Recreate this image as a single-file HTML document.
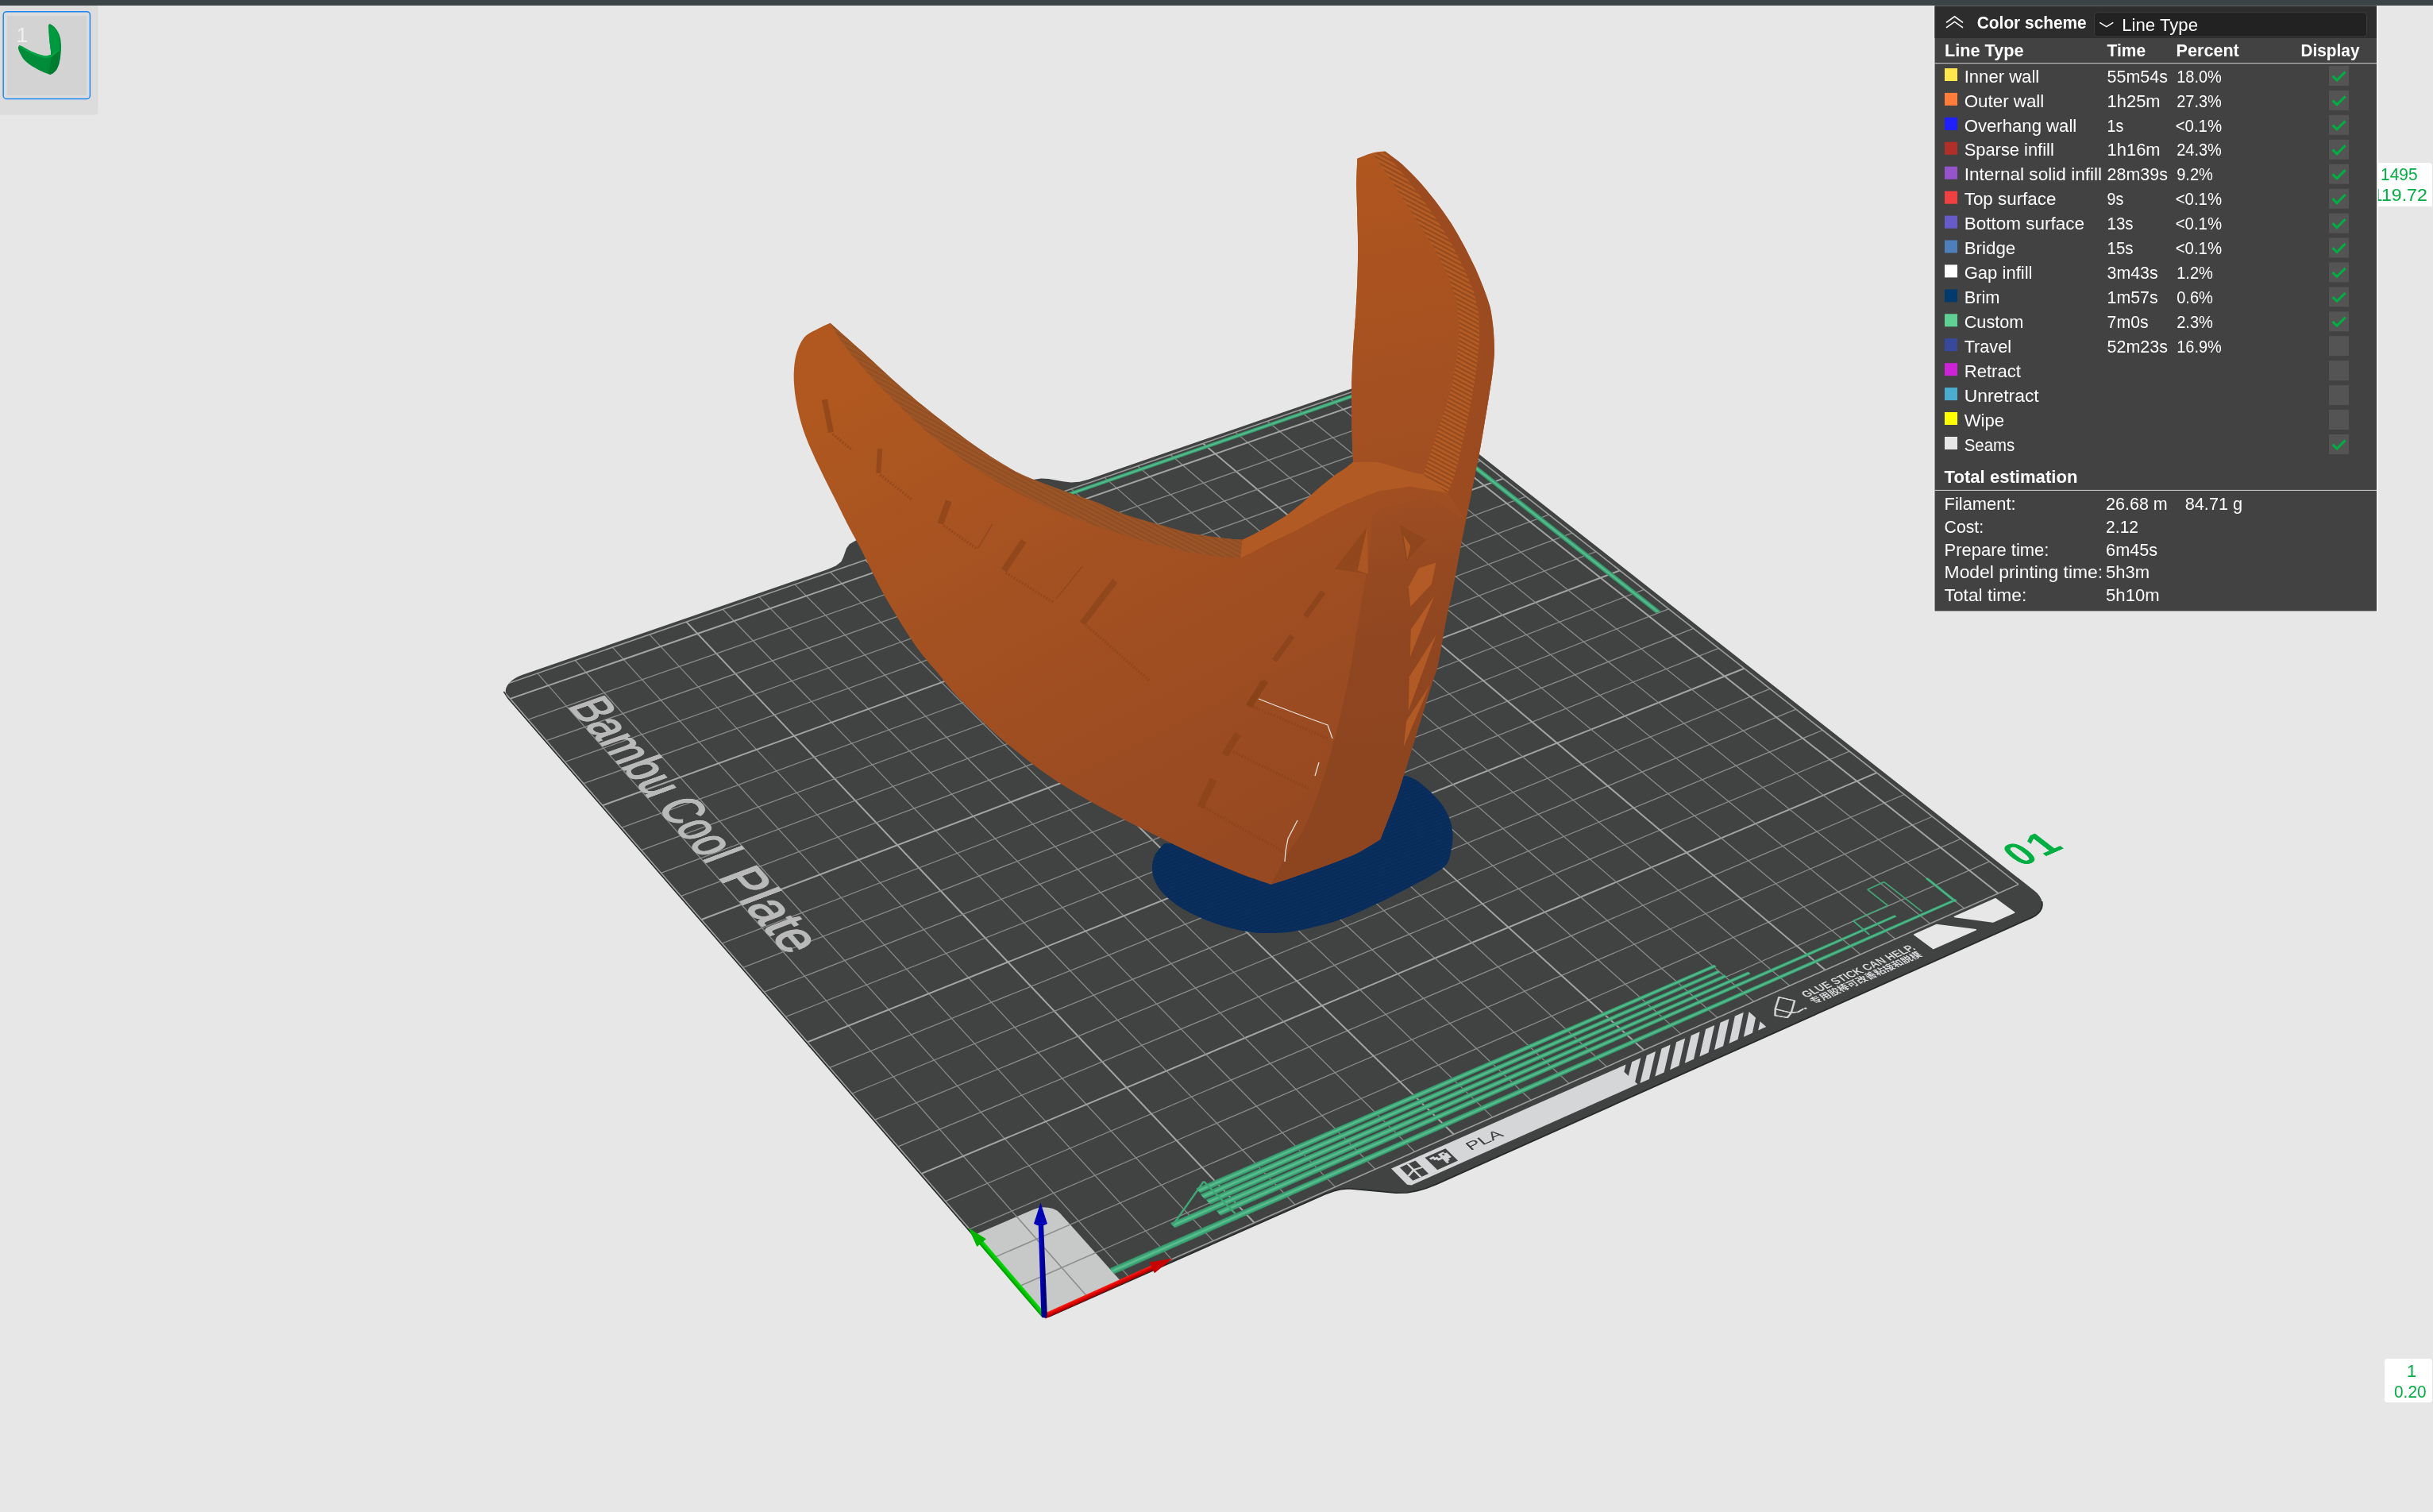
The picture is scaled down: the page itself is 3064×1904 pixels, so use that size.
<!DOCTYPE html><html><head><meta charset="utf-8"><title>Preview</title><style>html,body{margin:0;padding:0}body{width:3064px;height:1904px;background:#e7e7e7;position:relative;overflow:hidden}</style></head><body>
<svg xmlns="http://www.w3.org/2000/svg" width="3064" height="1904" viewBox="0 0 3064 1904" style="position:absolute;left:0;top:0">
<defs>
<linearGradient id="gWing" gradientUnits="userSpaceOnUse" x1="1150" y1="430" x2="1500" y2="1100"><stop offset="0" stop-color="#b0581f"/><stop offset="0.45" stop-color="#a45122"/><stop offset="1" stop-color="#974921"/></linearGradient>
<linearGradient id="gHornIn" gradientUnits="userSpaceOnUse" x1="1720" y1="200" x2="1800" y2="600"><stop offset="0" stop-color="#b0561f"/><stop offset="1" stop-color="#a04e22"/></linearGradient>
<linearGradient id="gRed" gradientUnits="userSpaceOnUse" x1="0" y1="-4" x2="0" y2="4"><stop offset="0" stop-color="#ff2a1a"/><stop offset="0.5" stop-color="#e00000"/><stop offset="1" stop-color="#7a0000"/></linearGradient>
<linearGradient id="gGreen" gradientUnits="userSpaceOnUse" x1="0" y1="-4" x2="0" y2="4"><stop offset="0" stop-color="#008a00"/><stop offset="0.5" stop-color="#00c400"/><stop offset="1" stop-color="#11e011"/></linearGradient>
<linearGradient id="gBlue" gradientUnits="userSpaceOnUse" x1="1308" y1="0" x2="1316" y2="0"><stop offset="0" stop-color="#0000d0"/><stop offset="0.45" stop-color="#0000b0"/><stop offset="1" stop-color="#000078"/></linearGradient>
<linearGradient id="gFace" gradientUnits="userSpaceOnUse" x1="0" y1="630" x2="0" y2="960"><stop offset="0" stop-color="#8d4520" stop-opacity="0.15"/><stop offset="0.5" stop-color="#8d4520" stop-opacity="0.75"/><stop offset="1" stop-color="#8d4520" stop-opacity="1"/></linearGradient>
<pattern id="hatch" width="5" height="5" patternUnits="userSpaceOnUse" patternTransform="rotate(28)"><rect width="5" height="2.2" fill="#7a3c18" fill-opacity="0.55"/></pattern>
<pattern id="brimP" width="4" height="4" patternUnits="userSpaceOnUse" patternTransform="rotate(-20)"><rect width="4" height="1.2" fill="#06244d" fill-opacity="0.5"/></pattern>
</defs>
<path d="M1312.8 1656.3 L640.1 879.4 L640.1 879.4 L638.1 876.4 L636.9 873.2 L636.7 869.9 L637.3 866.5 L638.9 863.2 L641.3 859.9 L644.5 856.9 L648.4 854.2 L653 851.7 L658 849.7 L1042.3 717.1 L1052.7 712.5 L1059.4 707.3 L1062.2 701.3 L1066 690.4 L1069.8 685.3 L1077.1 680.9 L1085.4 677.4 L1292.2 606.5 L1301.2 604 L1311.1 602.5 L1320.4 603 L1338.5 606.2 L1348.8 607.6 L1359.5 606.7 L1370.7 603.8 L1717.3 484.2 L1717.3 484.2 L1722.2 482.9 L1727.5 482.1 L1733 481.8 L1738.6 482.2 L1743.9 483.1 L1748.8 484.5 L1753.2 486.4 L1756.8 488.7 L2562.1 1121.7 L2562.1 1121.7 L2565.8 1125.1 L2568.7 1128.7 L2570.7 1132.5 L2571.8 1136.3 L2571.9 1140.1 L2571 1143.8 L2569.1 1147.3 L2566.4 1150.5 L2562.8 1153.3 L2558.4 1155.6 L1808.6 1491.4 L1795.6 1496.5 L1784.4 1499.7 L1772 1501.8 L1757.8 1502.1 L1698.2 1496.7 L1688.2 1497.6 L1679.4 1499.8 L1668.8 1503.7 L1321.5 1657.6 L1321.5 1657.6 L1318.3 1658.3 L1315.2 1657.8 L1312.8 1656.3Z" fill="#414342"/>
<path d="M634.4 870.9 L640.1 879.4 L1312.8 1656.3" fill="none" stroke="#292a2a" stroke-width="1.6"/>
<path d="M1312.8 1656.3 L1321.5 1657.6 L1668.8 1503.7 L1679.4 1499.8 L1688.2 1497.6 L1698.2 1496.7 L1757.8 1502.1 L1772 1501.8 L1784.4 1499.7 L1795.6 1496.5 L1808.6 1491.4 L2558.4 1155.6 L2558.4 1155.6 L2562.9 1153.2 L2566.5 1150.3 L2569.3 1147.1 L2571.1 1143.5 L2571.9 1139.8 L2571.7 1135.9" fill="none" stroke="#292a2a" stroke-width="1.8" stroke-linejoin="round" stroke-linecap="round"/>
<path d="M1315.4 1656.7 L1412.1 1613.9 L1335.2 1527.9 L1335.2 1527.9 L1331.2 1524.6 L1326.1 1522.1 L1320.1 1520.7 L1313.8 1520.3 L1307.5 1521.1 L1301.6 1523 L1227.2 1554.9Z" fill="#c7c8c8"/>
<clipPath id="plateClip"><path d="M1312.8 1656.3 L640.1 879.4 L640.1 879.4 L638.1 876.4 L636.9 873.2 L636.7 869.9 L637.3 866.5 L638.9 863.2 L641.3 859.9 L644.5 856.9 L648.4 854.2 L653 851.7 L658 849.7 L1042.3 717.1 L1052.7 712.5 L1059.4 707.3 L1062.2 701.3 L1066 690.4 L1069.8 685.3 L1077.1 680.9 L1085.4 677.4 L1292.2 606.5 L1301.2 604 L1311.1 602.5 L1320.4 603 L1338.5 606.2 L1348.8 607.6 L1359.5 606.7 L1370.7 603.8 L1717.3 484.2 L1717.3 484.2 L1722.2 482.9 L1727.5 482.1 L1733 481.8 L1738.6 482.2 L1743.9 483.1 L1748.8 484.5 L1753.2 486.4 L1756.8 488.7 L2562.1 1121.7 L2562.1 1121.7 L2565.8 1125.1 L2568.7 1128.7 L2570.7 1132.5 L2571.8 1136.3 L2571.9 1140.1 L2571 1143.8 L2569.1 1147.3 L2566.4 1150.5 L2562.8 1153.3 L2558.4 1155.6 L1808.6 1491.4 L1795.6 1496.5 L1784.4 1499.7 L1772 1501.8 L1757.8 1502.1 L1698.2 1496.7 L1688.2 1497.6 L1679.4 1499.8 L1668.8 1503.7 L1321.5 1657.6 L1321.5 1657.6 L1318.3 1658.3 L1315.2 1657.8 L1312.8 1656.3Z"/></clipPath>
<g stroke-linecap="butt" clip-path="url(#plateClip)">
<line x1="1369.3" y1="1632.8" x2="676.9" y2="847.9" stroke="#8b8d8c" stroke-width="1.25"/>
<line x1="1283.5" y1="1619.8" x2="2505.4" y2="1084.9" stroke="#8b8d8c" stroke-width="1.25"/>
<line x1="1422.7" y1="1609.2" x2="724.3" y2="831.5" stroke="#8b8d8c" stroke-width="1.25"/>
<line x1="1252" y1="1583.5" x2="2469.2" y2="1056.4" stroke="#8b8d8c" stroke-width="1.25"/>
<line x1="1475.5" y1="1585.8" x2="771.4" y2="815.2" stroke="#8b8d8c" stroke-width="1.25"/>
<line x1="1221.1" y1="1547.8" x2="2433.5" y2="1028.3" stroke="#8b8d8c" stroke-width="1.25"/>
<line x1="1527.8" y1="1562.6" x2="818.1" y2="799.1" stroke="#8b8d8c" stroke-width="1.25"/>
<line x1="1190.6" y1="1512.6" x2="2398.3" y2="1000.5" stroke="#8b8d8c" stroke-width="1.25"/>
<line x1="1579.6" y1="1539.7" x2="864.4" y2="783.1" stroke="#a3a5a4" stroke-width="2.0"/>
<line x1="1160.6" y1="1477.9" x2="2363.5" y2="973.2" stroke="#a3a5a4" stroke-width="2.0"/>
<line x1="1630.9" y1="1517" x2="910.3" y2="767.2" stroke="#8b8d8c" stroke-width="1.25"/>
<line x1="1131" y1="1443.8" x2="2329.2" y2="946.2" stroke="#8b8d8c" stroke-width="1.25"/>
<line x1="1681.6" y1="1494.6" x2="955.8" y2="751.5" stroke="#8b8d8c" stroke-width="1.25"/>
<line x1="1101.8" y1="1410.1" x2="2295.4" y2="919.5" stroke="#8b8d8c" stroke-width="1.25"/>
<line x1="1731.9" y1="1472.3" x2="1000.9" y2="735.9" stroke="#8b8d8c" stroke-width="1.25"/>
<line x1="1073.1" y1="1377" x2="2262" y2="893.2" stroke="#8b8d8c" stroke-width="1.25"/>
<line x1="1781.6" y1="1450.3" x2="1045.7" y2="720.5" stroke="#8b8d8c" stroke-width="1.25"/>
<line x1="1044.8" y1="1344.3" x2="2229.1" y2="867.3" stroke="#8b8d8c" stroke-width="1.25"/>
<line x1="1830.9" y1="1428.5" x2="1090.1" y2="705.1" stroke="#a3a5a4" stroke-width="2.0"/>
<line x1="1016.9" y1="1312.2" x2="2196.5" y2="841.7" stroke="#a3a5a4" stroke-width="2.0"/>
<line x1="1879.7" y1="1406.9" x2="1134.1" y2="689.9" stroke="#8b8d8c" stroke-width="1.25"/>
<line x1="989.5" y1="1280.4" x2="2164.4" y2="816.4" stroke="#8b8d8c" stroke-width="1.25"/>
<line x1="1928.1" y1="1385.5" x2="1177.8" y2="674.8" stroke="#8b8d8c" stroke-width="1.25"/>
<line x1="962.4" y1="1249.2" x2="2132.7" y2="791.4" stroke="#8b8d8c" stroke-width="1.25"/>
<line x1="1975.9" y1="1364.3" x2="1221.1" y2="659.8" stroke="#8b8d8c" stroke-width="1.25"/>
<line x1="935.7" y1="1218.3" x2="2101.4" y2="766.8" stroke="#8b8d8c" stroke-width="1.25"/>
<line x1="2023.4" y1="1343.3" x2="1264.1" y2="645" stroke="#8b8d8c" stroke-width="1.25"/>
<line x1="909.3" y1="1188" x2="2070.5" y2="742.4" stroke="#8b8d8c" stroke-width="1.25"/>
<line x1="2070.3" y1="1322.5" x2="1306.8" y2="630.3" stroke="#a3a5a4" stroke-width="2.0"/>
<line x1="883.4" y1="1158" x2="2040" y2="718.4" stroke="#a3a5a4" stroke-width="2.0"/>
<line x1="2116.8" y1="1301.9" x2="1349.1" y2="615.6" stroke="#8b8d8c" stroke-width="1.25"/>
<line x1="857.8" y1="1128.4" x2="2009.9" y2="694.7" stroke="#8b8d8c" stroke-width="1.25"/>
<line x1="2162.9" y1="1281.5" x2="1391" y2="601.1" stroke="#8b8d8c" stroke-width="1.25"/>
<line x1="832.5" y1="1099.3" x2="1980.1" y2="671.2" stroke="#8b8d8c" stroke-width="1.25"/>
<line x1="2208.6" y1="1261.3" x2="1432.7" y2="586.8" stroke="#8b8d8c" stroke-width="1.25"/>
<line x1="807.6" y1="1070.6" x2="1950.7" y2="648.1" stroke="#8b8d8c" stroke-width="1.25"/>
<line x1="2253.8" y1="1241.3" x2="1474" y2="572.5" stroke="#8b8d8c" stroke-width="1.25"/>
<line x1="783.1" y1="1042.2" x2="1921.7" y2="625.2" stroke="#8b8d8c" stroke-width="1.25"/>
<line x1="2298.6" y1="1221.5" x2="1514.9" y2="558.3" stroke="#a3a5a4" stroke-width="2.0"/>
<line x1="758.9" y1="1014.3" x2="1893" y2="602.6" stroke="#a3a5a4" stroke-width="2.0"/>
<line x1="2343" y1="1201.8" x2="1555.6" y2="544.3" stroke="#8b8d8c" stroke-width="1.25"/>
<line x1="735" y1="986.7" x2="1864.7" y2="580.3" stroke="#8b8d8c" stroke-width="1.25"/>
<line x1="2387" y1="1182.4" x2="1595.9" y2="530.3" stroke="#8b8d8c" stroke-width="1.25"/>
<line x1="711.4" y1="959.5" x2="1836.7" y2="558.3" stroke="#8b8d8c" stroke-width="1.25"/>
<line x1="2430.6" y1="1163.1" x2="1636" y2="516.5" stroke="#8b8d8c" stroke-width="1.25"/>
<line x1="688.1" y1="932.6" x2="1809" y2="536.5" stroke="#8b8d8c" stroke-width="1.25"/>
<line x1="2473.8" y1="1144" x2="1675.7" y2="502.8" stroke="#8b8d8c" stroke-width="1.25"/>
<line x1="665.1" y1="906.1" x2="1781.7" y2="515" stroke="#8b8d8c" stroke-width="1.25"/>
<line x1="2516.6" y1="1125" x2="1715.1" y2="489.2" stroke="#a3a5a4" stroke-width="2.0"/>
<line x1="642.5" y1="879.9" x2="1754.7" y2="493.7" stroke="#a3a5a4" stroke-width="2.0"/>
<line x1="1315.4" y1="1656.7" x2="2542" y2="1113.7" stroke="#9c9e9d" stroke-width="1.6"/>
<line x1="2542" y1="1113.7" x2="1738.6" y2="481.1" stroke="#9c9e9d" stroke-width="1.6"/>
<line x1="1738.6" y1="481.1" x2="629" y2="864.4" stroke="#9c9e9d" stroke-width="1.6"/>
<line x1="629" y1="864.4" x2="1315.4" y2="1656.7" stroke="#9c9e9d" stroke-width="1.6"/>
</g>
<g>
<line x1="1369.3" y1="1632.8" x2="1280.4" y2="1532" stroke="#8f9090" stroke-width="1.3"/>
<line x1="1283.5" y1="1619.8" x2="1379.7" y2="1577.7" stroke="#8f9090" stroke-width="1.3"/>
<line x1="1252" y1="1583.5" x2="1347.8" y2="1542" stroke="#8f9090" stroke-width="1.3"/>
</g>
<path d="M1752 1471.6 L2039.3 1344.2 L2062.4 1365.3 L1777.8 1492.4 L1772.1 1491.7Z" fill="#d4d6d7"/>
<path d="M2045.1 1350.5 L2047.5 1340.5 L2038.6 1344.5Z" fill="#d4d6d7"/>
<path d="M2058.9 1363.1 L2066.3 1332.2 L2055.1 1337.2 L2050.6 1355.5Z" fill="#d4d6d7"/>
<path d="M2065.4 1364 L2076.8 1358.9 L2085 1323.9 L2073.8 1328.9Z" fill="#d4d6d7"/>
<path d="M2084.3 1355.5 L2095.6 1350.5 L2103.7 1315.6 L2092.5 1320.6Z" fill="#d4d6d7"/>
<path d="M2103.1 1347.2 L2114.3 1342.1 L2122.2 1307.4 L2111.1 1312.3Z" fill="#d4d6d7"/>
<path d="M2121.8 1338.8 L2133 1333.8 L2140.7 1299.2 L2129.7 1304.1Z" fill="#d4d6d7"/>
<path d="M2140.4 1330.5 L2151.5 1325.5 L2159.2 1291 L2148.1 1295.9Z" fill="#d4d6d7"/>
<path d="M2159 1322.2 L2170.1 1317.2 L2177.5 1282.9 L2166.5 1287.8Z" fill="#d4d6d7"/>
<path d="M2177.5 1313.9 L2188.5 1309 L2195.8 1274.8 L2184.9 1279.6Z" fill="#d4d6d7"/>
<path d="M2195.9 1305.7 L2206.9 1300.8 L2211 1281.4 L2202.6 1274.1Z" fill="#d4d6d7"/>
<path d="M2214.2 1297.5 L2224.3 1293 L2216.6 1286.3Z" fill="#d4d6d7"/>
<path d="M1762.9 1470.2 L1782.5 1461.5 L1799.1 1477.9 L1779.4 1486.7Z" fill="#414342"/>
<path d="M1774 1465.3 L1790.5 1481.7 L1788.1 1482.8 L1771.6 1466.3Z" fill="#d4d6d7"/>
<path d="M1779.6 1472.3 L1790.3 1469 L1791.6 1470.8 L1780.8 1474.1Z" fill="#d4d6d7"/>
<path d="M1781.5 1473.7 L1775 1481.5 L1772.4 1480.5 L1778.9 1472.7Z" fill="#d4d6d7"/>
<path d="M1794.5 1457.7 L1820.4 1446.2 L1836.1 1461.6 L1810.2 1473.2Z" fill="#414342"/>
<path d="M1799.8 1458.4 L1805.3 1455.9 L1807.4 1458.1 L1802 1460.5Z" fill="#d4d6d7"/>
<path d="M1810.7 1453.5 L1817.6 1450.5 L1819.8 1452.6 L1812.9 1455.7Z" fill="#d4d6d7"/>
<path d="M1804.4 1459 L1809.9 1456.6 L1812 1458.7 L1806.6 1461.2Z" fill="#d4d6d7"/>
<path d="M1812.6 1455.4 L1822 1451.2 L1824.1 1453.4 L1814.8 1457.5Z" fill="#d4d6d7"/>
<path d="M1809 1459.7 L1823.9 1453.1 L1826.1 1455.2 L1811.2 1461.8Z" fill="#d4d6d7"/>
<path d="M1816.4 1459.1 L1825.8 1455 L1828 1457.1 L1818.6 1461.3Z" fill="#d4d6d7"/>
<path d="M1818.3 1461 L1823.7 1458.6 L1825.9 1460.7 L1820.5 1463.2Z" fill="#d4d6d7"/>
<path d="M1820.2 1462.9 L1822.9 1461.7 L1825.1 1463.8 L1822.4 1465Z" fill="#d4d6d7"/>
<path d="M1815.8 1453.6 L1818 1452.6 L1819.6 1454.2 L1817.4 1455.1Z" fill="#414342"/>
<path d="M2410.7 1177 L2438.9 1164.4 L2488.3 1170.7 L2434.8 1194.6Z" fill="#e7e7e7" stroke="#e7e7e7" stroke-width="1.5" stroke-linejoin="round"/>
<path d="M2461.4 1154.5 L2512.9 1131.7 L2536.8 1149.1 L2509.8 1161.1Z" fill="#e7e7e7" stroke="#e7e7e7" stroke-width="1.5" stroke-linejoin="round"/>
<path d="M1180.3 677.2 L1732.7 486.2 L1736.9 489.5 L1184.2 680.8Z" fill="#33926a"/>
<path d="M1180.9 677.7 L1733.3 486.6 L1736.3 489 L1183.6 680.3Z" fill="#40a676"/>
<path d="M1181.7 678.5 L1734.2 487.3 L1735.4 488.3 L1182.8 679.6Z" fill="#58be8f"/>
<path d="M1732.7 486.1 L2091.5 769.5 L2085 772 L1726.4 488.3Z" fill="#33926a"/>
<path d="M1731.8 486.4 L2090.6 769.9 L2085.9 771.7 L1727.3 488Z" fill="#40a676"/>
<path d="M1730.5 486.9 L2089.2 770.4 L2087.3 771.1 L1728.6 487.5Z" fill="#58be8f"/>
<path d="M1397.3 1597.3 L2461.8 1131.7 L2464.7 1134 L1403.4 1604.2Z" fill="#33926a"/>
<path d="M1398.1 1598.3 L2462.2 1132 L2464.3 1133.7 L1402.6 1603.3Z" fill="#40a676"/>
<path d="M1399.4 1599.8 L2462.8 1132.5 L2463.7 1133.2 L1401.3 1601.8Z" fill="#58be8f"/>
<path d="M2461 1135.9 L2424.7 1106.7 L2428.1 1105.2 L2464.5 1134.4Z" fill="#33926a"/>
<path d="M2461.5 1135.7 L2425.2 1106.5 L2427.7 1105.4 L2464 1134.6Z" fill="#40a676"/>
<path d="M2462.2 1135.4 L2425.9 1106.2 L2426.9 1105.7 L2463.3 1134.9Z" fill="#58be8f"/>
<path d="M1531.8 1524.6 L2385.8 1152.2 L2388.6 1154.5 L1537.5 1530.7Z" fill="#33926a"/>
<path d="M1532.6 1525.4 L2386.2 1152.5 L2388.2 1154.2 L1536.7 1529.8Z" fill="#40a676"/>
<path d="M1533.8 1526.7 L2386.8 1153 L2387.6 1153.7 L1535.5 1528.6Z" fill="#58be8f"/>
<path d="M1473.8 1540 L2201.2 1223.6 L2204.7 1226.6 L1479.7 1546.3Z" fill="#33926a"/>
<path d="M1474.7 1540.8 L2201.7 1224 L2204.2 1226.2 L1478.9 1545.4Z" fill="#40a676"/>
<path d="M1475.9 1542.2 L2202.4 1224.6 L2203.5 1225.6 L1477.6 1544.1Z" fill="#58be8f"/>
<path d="M1518.7 1510.6 L2171.5 1227.3 L2175.1 1230.4 L1524.3 1516.7Z" fill="#33926a"/>
<path d="M1519.4 1511.4 L2172 1227.7 L2174.6 1230 L1523.5 1515.8Z" fill="#40a676"/>
<path d="M1520.6 1512.7 L2172.7 1228.4 L2173.8 1229.3 L1522.3 1514.5Z" fill="#58be8f"/>
<path d="M1511.6 1503.8 L2163 1221.8 L2166.6 1224.9 L1517.3 1509.9Z" fill="#33926a"/>
<path d="M1512.4 1504.7 L2163.5 1222.2 L2166.1 1224.5 L1516.5 1509.1Z" fill="#40a676"/>
<path d="M1513.6 1506 L2164.3 1222.9 L2165.4 1223.8 L1515.3 1507.8Z" fill="#58be8f"/>
<path d="M1506.1 1496.5 L2158.3 1214.7 L2161.9 1217.8 L1511.8 1502.5Z" fill="#33926a"/>
<path d="M1506.9 1497.3 L2158.8 1215.1 L2161.4 1217.3 L1511 1501.6Z" fill="#40a676"/>
<path d="M1508.1 1498.6 L2159.5 1215.7 L2160.6 1216.7 L1509.8 1500.4Z" fill="#58be8f"/>
<path d="M1475.5 1542.7 L1514.7 1487.3 L1517.1 1488 L1478 1543.5Z" fill="#40a676"/>
<path d="M1517.1 1487.1 L1556.8 1527.8 L1554.5 1528.8 L1514.8 1488.2Z" fill="#40a676"/>
<path d="M2353.3 1177.4 L2332.9 1159.9 L2334.7 1159.1 L2355.2 1176.6Z" fill="#40a676"/>
<path d="M2333.1 1158.9 L2376.6 1139.8 L2378.2 1141 L2334.6 1160.1Z" fill="#40a676"/>
<path d="M2376.5 1140.8 L2351 1120.5 L2352.8 1119.7 L2378.3 1140Z" fill="#40a676"/>
<path d="M2351.1 1119.5 L2371.9 1110 L2373.5 1111.2 L2352.6 1120.7Z" fill="#40a676"/>
<path d="M2373.6 1110.2 L2421.4 1147.4 L2419.6 1148.3 L2371.8 1111Z" fill="#40a676"/>
<path d="M1465.8 1062.4 C1463.9 1064.8 1457 1071.6 1454.5 1076.7 C1452 1081.8 1451 1087.7 1451 1093.2 C1451 1098.7 1452 1104.1 1454.5 1109.6 C1457 1115.1 1460.5 1120.6 1465.8 1126.1 C1471.1 1131.6 1478.1 1137.4 1486.3 1142.5 C1494.5 1147.6 1504.8 1152.6 1515.1 1156.9 C1525.4 1161.2 1537 1165.3 1548 1168.2 C1559 1171.1 1569.5 1173.4 1580.8 1174.4 C1592.1 1175.4 1604.8 1175.3 1615.8 1174.4 C1626.8 1173.5 1634.6 1172 1646.6 1169.2 C1658.6 1166.5 1674 1162.7 1687.7 1157.9 C1701.4 1153.1 1715.1 1146.7 1728.8 1140.4 C1742.5 1134.1 1757.9 1126.1 1769.9 1119.9 C1781.9 1113.8 1792.1 1108.6 1800.7 1103.5 C1809.3 1098.4 1816.8 1094.6 1821.3 1089.1 C1825.8 1083.6 1826.1 1076.8 1827.5 1070.6 C1828.9 1064.4 1829.7 1058.3 1829.5 1052.1 C1829.3 1045.9 1828.5 1039.8 1826.4 1033.6 C1824.4 1027.4 1821.1 1020.9 1817.2 1015.1 C1813.3 1009.3 1807.9 1003.7 1802.8 998.6 C1797.7 993.5 1791.2 987.8 1786.4 984.3 C1781.6 980.8 1776.1 978.8 1774 977.7 C1769.2 977.2 1749.8 975.5 1745 975 C1737.5 985.8 1707.5 1029.2 1700 1040 C1683.3 1049.2 1616.7 1085.8 1600 1095 C1585 1089.2 1525 1065.8 1510 1060 C1502.6 1060.4 1473.2 1062 1465.8 1062.4Z" fill="#0a2f5e"/>
<path d="M1465.8 1062.4 C1463.9 1064.8 1457 1071.6 1454.5 1076.7 C1452 1081.8 1451 1087.7 1451 1093.2 C1451 1098.7 1452 1104.1 1454.5 1109.6 C1457 1115.1 1460.5 1120.6 1465.8 1126.1 C1471.1 1131.6 1478.1 1137.4 1486.3 1142.5 C1494.5 1147.6 1504.8 1152.6 1515.1 1156.9 C1525.4 1161.2 1537 1165.3 1548 1168.2 C1559 1171.1 1569.5 1173.4 1580.8 1174.4 C1592.1 1175.4 1604.8 1175.3 1615.8 1174.4 C1626.8 1173.5 1634.6 1172 1646.6 1169.2 C1658.6 1166.5 1674 1162.7 1687.7 1157.9 C1701.4 1153.1 1715.1 1146.7 1728.8 1140.4 C1742.5 1134.1 1757.9 1126.1 1769.9 1119.9 C1781.9 1113.8 1792.1 1108.6 1800.7 1103.5 C1809.3 1098.4 1816.8 1094.6 1821.3 1089.1 C1825.8 1083.6 1826.1 1076.8 1827.5 1070.6 C1828.9 1064.4 1829.7 1058.3 1829.5 1052.1 C1829.3 1045.9 1828.5 1039.8 1826.4 1033.6 C1824.4 1027.4 1821.1 1020.9 1817.2 1015.1 C1813.3 1009.3 1807.9 1003.7 1802.8 998.6 C1797.7 993.5 1791.2 987.8 1786.4 984.3 C1781.6 980.8 1776.1 978.8 1774 977.7 C1769.2 977.2 1749.8 975.5 1745 975 C1737.5 985.8 1707.5 1029.2 1700 1040 C1683.3 1049.2 1616.7 1085.8 1600 1095 C1585 1089.2 1525 1065.8 1510 1060 C1502.6 1060.4 1473.2 1062 1465.8 1062.4Z" fill="url(#brimP)"/>
<path d="M1045.6 406.7 C1048.8 409.6 1057 417 1065.1 424.2 C1073.1 431.4 1084 440.8 1093.9 449.9 C1103.8 459 1114.4 469.4 1124.7 478.6 C1135 487.9 1145.2 496.8 1155.5 505.4 C1165.8 514 1176 522 1186.3 530 C1196.6 538 1206.9 546.2 1217.2 553.7 C1227.5 561.2 1237.7 568.5 1248 575.2 C1258.3 581.9 1270.2 589.1 1278.8 593.7 C1287.4 598.3 1289.1 598.9 1299.4 603 C1309.7 607.1 1326.8 613.4 1340.5 618.4 C1354.2 623.4 1369.3 628 1381.6 632.8 C1393.9 637.6 1402.1 642.8 1414.4 647.3 C1426.7 651.8 1441.8 655.7 1455.5 659.6 C1469.2 663.5 1484.6 668.1 1496.6 670.9 C1508.6 673.6 1518.8 674.8 1527.4 676.1 C1536 677.4 1541.8 678 1548 678.6 C1554.2 679.2 1561.7 679.6 1564.4 679.8 C1566.8 678.7 1573 676 1578.8 673 C1584.6 670 1592.6 665.7 1599.4 661.7 C1606.2 657.8 1613.1 654.1 1619.9 649.3 C1626.8 644.5 1633.7 638.7 1640.5 632.9 C1647.3 627.1 1654.2 620.2 1661 614.4 C1667.8 608.6 1676.1 602.1 1681.6 598 C1687.1 593.9 1690.2 592.7 1693.9 590 C1697.7 587.3 1702.4 583.2 1704.1 581.8 C1703.9 578.7 1703.4 573.2 1703.1 563.3 C1702.8 553.4 1702.2 535.9 1702.1 522.2 C1702 508.5 1702 494.8 1702.3 481.1 C1702.6 467.4 1703.2 454.2 1704 440 C1704.8 425.8 1706.3 410.3 1707.2 396.1 C1708.1 381.9 1708.8 368.7 1709.3 355 C1709.8 341.3 1710.3 327.6 1710.3 313.9 C1710.3 300.2 1709.6 286.5 1709.3 272.8 C1709 259.1 1708.2 243.9 1708.2 231.7 C1708.2 219.5 1709.1 205.1 1709.3 199.8 C1712.5 198.6 1723 194.1 1728.8 192.6 C1734.6 191.1 1741.6 190.9 1744.2 190.6 C1747.8 193.3 1758.8 200.8 1765.8 207 C1772.8 213.2 1779.4 220 1786.3 227.5 C1793.2 235 1800.1 243.3 1806.9 252.2 C1813.8 261.1 1821.2 271.4 1827.4 281 C1833.6 290.6 1838.8 300.1 1843.9 309.7 C1849.1 319.3 1854.2 329.6 1858.3 338.5 C1862.4 347.4 1865.4 355 1868.5 363.2 C1871.6 371.4 1874.7 378.9 1876.8 387.8 C1878.9 396.7 1880.1 407.1 1880.9 416.6 C1881.8 426.1 1882.2 435.8 1881.9 445 C1881.6 454.2 1880.5 462.6 1879.3 472 C1878.1 481.4 1876.3 491.6 1874.7 501.7 C1873.1 511.8 1871.3 522.2 1869.6 532.5 C1867.9 542.8 1866.3 553 1864.4 563.3 C1862.5 573.6 1860.3 583.8 1858.3 594.1 C1856.2 604.4 1854.2 614.7 1852.1 625 C1850 635.3 1848 645.5 1845.9 655.8 C1843.9 666.1 1841.8 676.3 1839.8 686.6 C1837.8 696.9 1836.2 706.9 1834.2 717.4 C1832.2 727.9 1829.9 739.8 1827.8 749.9 C1825.7 760 1823.6 767.6 1821.6 778 C1819.5 788.4 1817.4 801.7 1815.5 812 C1813.6 822.3 1812.2 832 1810.2 840 C1808.2 848 1805.8 852.9 1803.6 859.8 C1801.4 866.7 1800.3 870.5 1797 881.3 C1793.7 892 1788.2 910 1783.8 924.3 C1779.4 938.6 1774.7 954.1 1770.6 967.3 C1766.5 980.5 1764.4 988.6 1759 1003.6 C1753.6 1018.6 1741.8 1048.1 1738.3 1057 C1733.3 1060 1720.1 1069 1708.3 1074.7 C1696.5 1080.4 1680.9 1086 1667.2 1091.1 C1653.5 1096.2 1637.2 1101.7 1626.1 1105.5 C1615 1109.3 1604.7 1112.3 1600.4 1113.7 C1595.6 1112 1581.3 1107.5 1571.3 1103.8 C1561.3 1100.1 1550.8 1095.8 1540.5 1091.5 C1530.2 1087.2 1519.9 1082.7 1509.6 1078.1 C1499.3 1073.5 1489.1 1068.7 1478.8 1063.7 C1468.5 1058.7 1458.3 1053.4 1448 1048.3 C1437.7 1043.2 1427.5 1038.2 1417.2 1032.9 C1406.9 1027.6 1396.6 1022.1 1386.3 1016.5 C1376 1010.9 1365.8 1005.2 1355.5 999 C1345.2 992.8 1335 986.5 1324.7 979.5 C1314.4 972.5 1304.2 964.8 1293.9 956.9 C1283.6 949 1273.3 941.1 1263 932.2 C1252.7 923.3 1242.5 913.3 1232.2 903.4 C1221.9 893.5 1210.1 882.1 1201.4 872.6 C1192.7 863.1 1187.2 855.1 1180.2 846.6 C1173.2 838.1 1166.1 830.5 1159.6 821.9 C1153.1 813.3 1146.9 804.1 1141.1 795.2 C1135.3 786.3 1130.2 777.8 1124.7 768.5 C1119.2 759.2 1113.3 749.3 1108.2 739.7 C1103.1 730.1 1098.4 719.9 1093.9 711 C1089.5 702.1 1085.6 694.2 1081.5 686.3 C1077.4 678.4 1074 673 1069.2 663.7 C1064.4 654.5 1058.3 641.8 1052.8 630.8 C1047.3 619.8 1041.6 609 1036.3 598 C1031 587 1025.2 575 1020.9 565 C1016.6 555 1013.5 547.1 1010.6 538.2 C1007.8 529.3 1005.5 520 1003.8 511.5 C1002.1 502.9 1000.9 494.4 1000.3 486.9 C999.6 479.4 999.5 472.8 999.9 466.3 C1000.2 459.8 1001.1 453.3 1002.4 447.8 C1003.7 442.3 1005.3 437.7 1007.5 433.4 C1009.7 429.1 1012 425.4 1015.8 422.1 C1019.6 418.9 1025.1 416.5 1030.1 413.9 C1035.1 411.3 1043 407.9 1045.6 406.7Z" fill="url(#gWing)"/>
<path d="M1600.4 1113.7 L1618 1080 L1640 1048.3 L1658.2 1005.3 L1671.4 964 L1683 922.6 L1694.5 873 L1701.2 840 L1707.6 800 L1716 750 L1722 715 L1726 680 L1728 650 L1740 640 L1800 625 L1845.9 655.8 L1839.8 686.6 L1834.2 717.4 L1827.8 749.9 L1821.6 778 L1815.5 812 L1810.2 840 L1803.6 859.8 L1797 881.3 L1783.8 924.3 L1770.6 967.3 L1759 1003.6 L1738.3 1057 L1708.3 1074.7 L1667.2 1091.1 L1626.1 1105.5Z" fill="url(#gFace)"/>
<path d="M1564.4 679.8 L1578.8 673 L1599.4 661.7 L1619.9 649.3 L1640.5 632.9 L1661 614.4 L1681.6 598 L1693.9 590 L1704.1 581.8 L1735 581.8 L1776.1 594.1 L1792.5 597.2 L1823.3 620.8 L1823.3 620.8 L1776.1 612.6 L1735 618.8 L1693.9 635.2 L1665 650 L1632.2 668.1 L1600 683 L1580 694 L1562 703Z" fill="#b25a24"/>
<path d="M1045.6 406.7 L1065.1 424.2 L1093.9 449.9 L1124.7 478.6 L1155.5 505.4 L1186.3 530 L1217.2 553.7 L1248 575.2 L1278.8 593.7 L1299.4 603 L1340.5 618.4 L1381.6 632.8 L1414.4 647.3 L1455.5 659.6 L1496.6 670.9 L1527.4 676.1 L1548 678.6 L1564.4 679.8 L1562 703 L1540 701.5 L1500 696 L1450 684.2 L1402.1 669.8 L1361 655.4 L1319.9 639 L1289.1 624.6 L1258.3 608.1 L1227.4 589.6 L1196.6 567 L1165.8 542.4 L1135 513.6 L1104.1 482.8 L1073.3 447.8 L1058 428 L1045.6 406.7Z" fill="#95562a" fill-opacity="0.75"/>
<path d="M1045.6 406.7 L1065.1 424.2 L1093.9 449.9 L1124.7 478.6 L1155.5 505.4 L1186.3 530 L1217.2 553.7 L1248 575.2 L1278.8 593.7 L1299.4 603 L1340.5 618.4 L1381.6 632.8 L1414.4 647.3 L1455.5 659.6 L1496.6 670.9 L1527.4 676.1 L1548 678.6 L1564.4 679.8 L1562 703 L1540 701.5 L1500 696 L1450 684.2 L1402.1 669.8 L1361 655.4 L1319.9 639 L1289.1 624.6 L1258.3 608.1 L1227.4 589.6 L1196.6 567 L1165.8 542.4 L1135 513.6 L1104.1 482.8 L1073.3 447.8 L1058 428 L1045.6 406.7Z" fill="url(#hatch)" fill-opacity="0.5"/>
<path d="M1709.3 199.8 L1708.2 231.7 L1709.3 272.8 L1710.3 313.9 L1709.3 355 L1707.2 396.1 L1704 440 L1702.3 481.1 L1702.1 522.2 L1703.1 563.3 L1704.1 581.8 L1720 580.5 L1735 581.8 L1755.5 586.9 L1776.1 594.1 L1792.5 597.2 L1792.5 597.2 L1802.8 567 L1811 540 L1821 512 L1829.5 479.9 L1835.5 445.4 L1837.7 412.5 L1834.6 379.6 L1823.3 346.7 L1806.9 313.9 L1786.3 281 L1765.8 248.1 L1745.2 217.3 L1728.8 193.6Z" fill="url(#gHornIn)"/>
<path d="M1728.8 193.6 L1745.2 217.3 L1765.8 248.1 L1786.3 281 L1806.9 313.9 L1823.3 346.7 L1834.6 379.6 L1837.7 412.5 L1835.5 445.4 L1829.5 479.9 L1821 512 L1811 540 L1802.8 567 L1792.5 597.2 L1800 604 L1823.3 620.8 L1823.3 620.8 L1829.5 606 L1835.7 585 L1841.8 558 L1848 530 L1853.1 505 L1857.2 479.9 L1860.3 457.7 L1863.4 426.9 L1862.4 396.1 L1856.2 367.3 L1843.9 338.5 L1827.4 305.6 L1806.9 272.8 L1786.3 244 L1765.8 217.3 L1744.2 191.6Z" fill="#b55c25"/>
<path d="M1728.8 193.6 L1745.2 217.3 L1765.8 248.1 L1786.3 281 L1806.9 313.9 L1823.3 346.7 L1834.6 379.6 L1837.7 412.5 L1835.5 445.4 L1829.5 479.9 L1821 512 L1811 540 L1802.8 567 L1792.5 597.2 L1800 604 L1823.3 620.8 L1823.3 620.8 L1829.5 606 L1835.7 585 L1841.8 558 L1848 530 L1853.1 505 L1857.2 479.9 L1860.3 457.7 L1863.4 426.9 L1862.4 396.1 L1856.2 367.3 L1843.9 338.5 L1827.4 305.6 L1806.9 272.8 L1786.3 244 L1765.8 217.3 L1744.2 191.6Z" fill="url(#hatch)"/>
<path d="M1744.2 191.6 L1765.8 217.3 L1786.3 244 L1806.9 272.8 L1827.4 305.6 L1843.9 338.5 L1856.2 367.3 L1862.4 396.1 L1863.4 426.9 L1860.3 457.7 L1857.2 479.9 L1853.1 505 L1848 530 L1841.8 558 L1835.7 585 L1829.5 606 L1823.3 620.8 L1845.9 655.8 L1845.9 655.8 L1852.1 625 L1858.3 594.1 L1864.4 563.3 L1869.6 532.5 L1874.7 501.7 L1879.3 472 L1881.9 445 L1880.9 416.6 L1876.8 387.8 L1868.5 363.2 L1858.3 338.5 L1843.9 309.7 L1827.4 281 L1806.9 252.2 L1786.3 227.5 L1765.8 207 L1744.2 190.6Z" fill="#9c4b20"/>
<line x1="1038.4" y1="503.3" x2="1046.6" y2="544.4" stroke="#8a4319" stroke-width="7" stroke-opacity="0.7"/>
<line x1="1108.2" y1="565" x2="1106.2" y2="595.8" stroke="#8a4319" stroke-width="6" stroke-opacity="0.7"/>
<line x1="1194.6" y1="630.8" x2="1184.3" y2="659.6" stroke="#8a4319" stroke-width="8" stroke-opacity="0.7"/>
<line x1="1289.1" y1="681.2" x2="1264.4" y2="718.2" stroke="#8a4319" stroke-width="8" stroke-opacity="0.7"/>
<line x1="1404.2" y1="731.5" x2="1363.1" y2="784.9" stroke="#8a4319" stroke-width="8" stroke-opacity="0.7"/>
<line x1="1591.8" y1="858.2" x2="1573.3" y2="889" stroke="#8a4319" stroke-width="9" stroke-opacity="0.7"/>
<line x1="1559" y1="924" x2="1542.5" y2="950.7" stroke="#8a4319" stroke-width="9" stroke-opacity="0.7"/>
<line x1="1528.1" y1="981.5" x2="1511.7" y2="1016.5" stroke="#8a4319" stroke-width="9" stroke-opacity="0.7"/>
<line x1="1048.6" y1="546.5" x2="1073.3" y2="567" stroke="#8a4319" stroke-width="3.5" stroke-opacity="0.6" stroke-dasharray="2 2"/>
<line x1="1108.2" y1="597.8" x2="1149.3" y2="629.7" stroke="#8a4319" stroke-width="3.5" stroke-opacity="0.6" stroke-dasharray="2 2"/>
<line x1="1188.4" y1="661.7" x2="1229.5" y2="690.4" stroke="#8a4319" stroke-width="3.5" stroke-opacity="0.6" stroke-dasharray="2 2"/>
<line x1="1266.5" y1="721.2" x2="1326.1" y2="758.2" stroke="#8a4319" stroke-width="3.5" stroke-opacity="0.6" stroke-dasharray="2 2"/>
<line x1="1367.2" y1="787" x2="1447.3" y2="856.9" stroke="#8a4319" stroke-width="3.5" stroke-opacity="0.6" stroke-dasharray="2 2"/>
<line x1="1552.8" y1="946.6" x2="1650" y2="993.9" stroke="#8a4319" stroke-width="3.5" stroke-opacity="0.6" stroke-dasharray="2 2"/>
<line x1="1515.8" y1="1016.5" x2="1618.6" y2="1074" stroke="#8a4319" stroke-width="3.5" stroke-opacity="0.6" stroke-dasharray="2 2"/>
<line x1="1578" y1="890" x2="1672" y2="930" stroke="#8a4319" stroke-width="3.5" stroke-opacity="0.6" stroke-dasharray="2 2"/>
<line x1="1250" y1="659.6" x2="1231.5" y2="690.4" stroke="#8a4319" stroke-width="1.5" stroke-opacity="0.7"/>
<line x1="1363.1" y1="713" x2="1330.2" y2="754.1" stroke="#8a4319" stroke-width="1.5" stroke-opacity="0.7"/>
<path d="M1721.9 663.2 L1723 722.8 L1680.8 716.6Z" fill="#874118" fill-opacity="0.55"/>
<path d="M1721.9 663.2 L1723 722.8 L1709.6 718.6Z" fill="#b85e27" fill-opacity="0.7"/>
<path d="M1763 661.1 L1795.9 679.6 L1771.3 706.3Z" fill="#874118" fill-opacity="0.5"/>
<path d="M1767.2 673.4 L1776.4 687.8 L1772.3 704.3Z" fill="#b85e27" fill-opacity="0.8"/>
<path d="M1786.7 715.6 L1808.3 708.4 L1803.1 735.1 L1776.4 763.9 L1773.7 739.2Z" fill="#b85e27" fill-opacity="0.85"/>
<path d="M1806.6 749.9 L1775.8 827.6 L1776.8 792.6Z" fill="#b85e27" fill-opacity="0.85"/>
<path d="M1808.7 799.2 L1773.7 895.4 L1774.8 852.2Z" fill="#b85e27" fill-opacity="0.85"/>
<path d="M1800.5 862.9 L1767.6 940.6 L1771.3 907.7Z" fill="#b85e27" fill-opacity="0.85"/>
<line x1="1666.5" y1="745.4" x2="1643.9" y2="776.2" stroke="#874118" stroke-width="7" stroke-opacity="0.65"/>
<line x1="1627.4" y1="800.8" x2="1604.8" y2="831.7" stroke="#874118" stroke-width="7" stroke-opacity="0.65"/>
<line x1="1594.5" y1="857.4" x2="1571.9" y2="889.2" stroke="#874118" stroke-width="7" stroke-opacity="0.65"/>
<path d="M1585 880 Q1630 898 1672 913 L1678 930" fill="none" stroke="#e8e0da" stroke-width="1.3"/>
<path d="M1634 1033 L1622 1056 L1619 1072 L1618 1085" fill="none" stroke="#e8e0da" stroke-width="1.3"/>
<path d="M1661 960 L1656 977" fill="none" stroke="#e8e0da" stroke-width="1.3"/>
<g transform="translate(1315.3 1657.5) rotate(-130.64)"><rect x="0" y="-3.25" width="123.6" height="6.5" fill="url(#gGreen)"/><path d="M121.6 -7.5 L147.1 0 L121.6 7.5Z" fill="#00b400"/></g>
<g transform="translate(1315.3 1657.5) rotate(-24.26)"><rect x="0" y="-3.25" width="150.6" height="6.5" fill="url(#gRed)"/><path d="M148.6 -7.5 L176.9 0 L148.6 7.5Z" fill="#c80000"/></g>
<g><path d="M1307.6 1540 L1314 1540 L1318.8 1655 Q1318.8 1659.5 1315.3 1659.5 Q1311.5 1659.5 1311.3 1655Z" fill="url(#gBlue)"/><path d="M1302 1541 L1310.4 1514.5 L1319 1541 Q1310.5 1546 1302 1541Z" fill="#0000b4"/></g>
</svg>
<div style="position:absolute;left:0;top:0;width:2320px;height:2360px;transform-origin:0 0;transform:matrix3d(0.62925199,-0.16026119,0,0.0000528153,0.22615750,0.24985776,0,-0.0000808074,0,0,1,0,539.23656,832.27433,0,1);pointer-events:none">
<svg xmlns="http://www.w3.org/2000/svg" width="2320" height="2360" viewBox="0 0 290 295" font-family="'Liberation Sans', 'Noto Sans CJK SC', sans-serif">
<text transform="translate(20.2 35.0) rotate(90)" font-size="13.2" fill="#b9b9b9" stroke="#b9b9b9" stroke-width="0.4" textLength="43.9" lengthAdjust="spacingAndGlyphs">Bambu</text>
<text transform="translate(20.2 82.2) rotate(90)" font-size="13.2" fill="#b9b9b9" stroke="#b9b9b9" stroke-width="0.4" textLength="25.8" lengthAdjust="spacingAndGlyphs">Cool</text>
<text transform="translate(20.2 113.2) rotate(90)" font-size="13.2" fill="#b9b9b9" stroke="#b9b9b9" stroke-width="0.4" textLength="33.5" lengthAdjust="spacingAndGlyphs">Plate</text>
<text x="110" y="281.1" font-size="3.6" fill="#414342" textLength="8.7" lengthAdjust="spacingAndGlyphs">PLA</text>
<text x="200.4" y="280.2" font-size="3.1" font-weight="bold" fill="#d4d6d7" textLength="31.2" lengthAdjust="spacingAndGlyphs">GLUE STICK CAN HELP.</text>
<text x="200.5" y="282.9" font-size="2.55" font-weight="bold" fill="#d4d6d7" textLength="30.8" lengthAdjust="spacingAndGlyphs">专用胶棒可改善粘接和脱模</text>
<text x="270.9" y="270.5" font-size="11.3" font-weight="bold" fill="#00ae42" textLength="5.57" lengthAdjust="spacingAndGlyphs">0</text>
<text x="277.5" y="270.5" font-size="11.3" font-weight="bold" fill="#00ae42">1</text>
<g fill="none" stroke="#d4d6d7" stroke-width="0.42" stroke-linejoin="round" stroke-linecap="round"><path d="M195.6 276.8 L197.7 279.6 L194.5 282.4 L192.4 279.5Z M192.4 279.5 L191 281.2 L192.8 283.2 L194.5 282.4 M194.5 282.4 L196 283 L197.5 282.8"/></g><circle cx="198.1" cy="282.9" r="0.3" fill="#d4d6d7"/>
</svg></div>
<svg xmlns="http://www.w3.org/2000/svg" width="3064" height="1904" viewBox="0 0 3064 1904" style="position:absolute;left:0;top:0" font-family="'Liberation Sans', sans-serif">
<rect x="0" y="0" width="3064" height="7" fill="#3b4446"/>
<path d="M0 7 H120 Q123.5 7 123.5 10.5 V141 Q123.5 144.5 120 144.5 H0Z" fill="#dcdcdc"/>
<rect x="9" y="20" width="100" height="100" fill="#d3d3d3"/>
<rect x="4.2" y="14.7" width="109.2" height="109.8" rx="4" ry="4" fill="none" stroke="#1e88f0" stroke-width="1.5"/>
<text x="20.5" y="52.8" font-size="26.5" fill="#f2f2f2" fill-opacity="0.9">1</text>
<path d="M24.5 57.1 C25.5 57.5 28.2 58.6 30.6 59.9 C32.9 61.1 36 63.1 38.9 64.5 C41.8 65.9 45.1 67.2 48.1 68.2 C51.2 69.2 54.8 70.3 57.4 70.5 C60 70.7 62.8 69.3 63.9 69.1 C63.9 68.2 64.1 66.3 63.9 63.6 C63.7 60.8 62.9 56.1 62.5 52.4 C62.1 48.7 61.8 44.7 61.6 41.3 C61.3 37.9 60.9 34 61.1 32.1 C61.3 30.2 62.7 30.4 63 30 C63.9 30.7 66.8 32.2 68.5 33.9 C70.2 35.7 71.9 38.1 73.1 40.4 C74.4 42.7 75.3 45.2 75.9 47.8 C76.5 50.4 76.7 53.5 76.9 56.1 C77 58.8 77 60.8 76.9 63.6 C76.7 66.3 76.4 69.9 75.9 72.8 C75.5 75.7 74.8 78.7 74.1 81.1 C73.3 83.6 72.5 85.8 71.3 87.6 C70.1 89.5 68.1 91.2 66.7 92.3 C65.3 93.3 63.6 93.6 63 93.9 C61.7 93.5 58.3 92.5 55.6 91.3 C52.8 90.1 49.4 88.4 46.3 86.7 C43.2 85 39.7 83 37 81.1 C34.4 79.3 32.3 77.4 30.6 75.6 C28.9 73.7 27.9 71.9 26.9 70 C25.8 68.2 24.7 66.2 24.1 64.5 C23.4 62.8 22.9 61.1 23 59.9 C23 58.6 24.3 57.5 24.5 57.1Z" fill="#008c38"/>
<path d="M62.2 31.1 C63.3 31.9 66.7 33.8 68.5 35.8 C70.3 37.8 72.1 40.4 73.1 43.2 C74.2 46 74.4 49.2 74.5 52.4 C74.7 55.7 75.7 60.2 74.1 62.6 C72.5 65.1 66.4 66.5 64.8 67.3 C64.7 66.6 64.3 66 63.9 63.6 C63.5 61.1 62.9 56.1 62.5 52.4 C62.1 48.7 61.6 44.9 61.6 41.3 C61.5 37.8 62.1 32.8 62.2 31.1Z" fill="#009a3e"/>
<path d="M24.5 57.1 L30.6 59.9 L38.9 64.5 L48.1 68.2 L57.4 70.5 L63.9 69.1 L74.1 62.6 L74.8 63.6 L64.8 71.9 L57.4 73.3 L48.1 71 L38.9 67.3 L30.6 62.6 L24.3 58.7Z" fill="#07a548"/>
<path d="M64.8 71.9 L74.8 63.6 L75.5 72.8 L74.1 81.1 L71.3 87.6 L66.7 92.3 L63 93.9 L61.1 91.3Z" fill="#007c31"/>
<path d="M2993 205 H3059 Q3063 205 3063 209 V260 H2993Z" fill="#ffffff"/>
<text x="3021.3" y="227.4" font-size="22" fill="#00ae42" text-anchor="middle" textLength="46.5" lengthAdjust="spacingAndGlyphs">1495</text>
<text x="3022.3" y="252.9" font-size="22" fill="#00ae42" text-anchor="middle" textLength="69" lengthAdjust="spacingAndGlyphs">119.72</text>
<rect x="3003" y="1711" width="60" height="55" rx="3.5" fill="#ffffff"/>
<text x="3037" y="1733.9" font-size="22" fill="#00ae42" text-anchor="middle">1</text>
<text x="3035.3" y="1759.7" font-size="22" fill="#00ae42" text-anchor="middle" textLength="40.5" lengthAdjust="spacingAndGlyphs">0.20</text>
<rect x="2435.0" y="7.5" width="560.0" height="763.0" fill="#f4f4f4"/>
<rect x="2436.5" y="7.5" width="556.5" height="762.0" fill="#424243"/>
<rect x="2436.5" y="7.5" width="556.5" height="40.5" fill="#2d2d2e"/>
<path d="M2451 28.3 L2461.5 20.8 L2472 28.3 M2451 34.9 L2461.5 27.4 L2472 34.9" fill="none" stroke="#fff" stroke-width="1.6" stroke-linejoin="miter"/>
<text x="2489.8" y="35.8" font-size="21.5" fill="#fff" font-weight="bold" textLength="137.9" lengthAdjust="spacingAndGlyphs">Color scheme</text>
<rect x="2637.5" y="15.7" width="343" height="30.3" rx="3.5" fill="#222223" stroke="#3b3b3d" stroke-width="1"/>
<path d="M2644.3 28.4 L2652.8 33.6 L2661.3 28.4" fill="none" stroke="#fff" stroke-width="1.4"/>
<text x="2672.3" y="38.8" font-size="22" fill="#fff" textLength="95.7" lengthAdjust="spacingAndGlyphs">Line Type</text>
<text x="2449" y="70.8" font-size="21.5" fill="#fff" font-weight="bold" textLength="99.6" lengthAdjust="spacingAndGlyphs">Line Type</text>
<text x="2653.6" y="70.8" font-size="21.5" fill="#fff" font-weight="bold" textLength="48.5" lengthAdjust="spacingAndGlyphs">Time</text>
<text x="2740.6" y="70.8" font-size="21.5" fill="#fff" font-weight="bold" textLength="79.2" lengthAdjust="spacingAndGlyphs">Percent</text>
<text x="2897.5" y="70.8" font-size="21.5" fill="#fff" font-weight="bold" textLength="74" lengthAdjust="spacingAndGlyphs">Display</text>
<rect x="2436.5" y="79.1" width="556.5" height="1.1" fill="#c4c4c4"/>
<rect x="2449" y="86" width="16" height="16" fill="#FFE64D"/>
<text x="2473.7" y="103.6" font-size="22" fill="#fff" textLength="94.5" lengthAdjust="spacingAndGlyphs">Inner wall</text>
<text x="2653.6" y="103.6" font-size="22" fill="#fff" textLength="76.4" lengthAdjust="spacingAndGlyphs">55m54s</text>
<text x="2741.2" y="103.6" font-size="22" fill="#fff" textLength="56.6" lengthAdjust="spacingAndGlyphs">18.0%</text>
<rect x="2933" y="83" width="25" height="25" fill="#545455"/>
<path d="M2937.6 95.6 L2942.9 101.0 L2953.6 90.4" fill="none" stroke="#00ae42" stroke-width="3.1"/>
<rect x="2449" y="116.9" width="16" height="16" fill="#FF7D38"/>
<text x="2473.7" y="134.5" font-size="22" fill="#fff" textLength="100.6" lengthAdjust="spacingAndGlyphs">Outer wall</text>
<text x="2653.6" y="134.5" font-size="22" fill="#fff" textLength="67" lengthAdjust="spacingAndGlyphs">1h25m</text>
<text x="2741.2" y="134.5" font-size="22" fill="#fff" textLength="56.6" lengthAdjust="spacingAndGlyphs">27.3%</text>
<rect x="2933" y="113.9" width="25" height="25" fill="#545455"/>
<path d="M2937.6 126.5 L2942.9 131.9 L2953.6 121.3" fill="none" stroke="#00ae42" stroke-width="3.1"/>
<rect x="2449" y="147.9" width="16" height="16" fill="#1F1FFF"/>
<text x="2473.7" y="165.5" font-size="22" fill="#fff" textLength="141.6" lengthAdjust="spacingAndGlyphs">Overhang wall</text>
<text x="2653.6" y="165.5" font-size="22" fill="#fff" textLength="20.7" lengthAdjust="spacingAndGlyphs">1s</text>
<text x="2739.7" y="165.5" font-size="22" fill="#fff" textLength="58.3" lengthAdjust="spacingAndGlyphs">&lt;0.1%</text>
<rect x="2933" y="144.9" width="25" height="25" fill="#545455"/>
<path d="M2937.6 157.5 L2942.9 162.9 L2953.6 152.3" fill="none" stroke="#00ae42" stroke-width="3.1"/>
<rect x="2449" y="178.8" width="16" height="16" fill="#B03029"/>
<text x="2473.7" y="196.4" font-size="22" fill="#fff" textLength="113.1" lengthAdjust="spacingAndGlyphs">Sparse infill</text>
<text x="2653.6" y="196.4" font-size="22" fill="#fff" textLength="67" lengthAdjust="spacingAndGlyphs">1h16m</text>
<text x="2741.2" y="196.4" font-size="22" fill="#fff" textLength="56.6" lengthAdjust="spacingAndGlyphs">24.3%</text>
<rect x="2933" y="175.8" width="25" height="25" fill="#545455"/>
<path d="M2937.6 188.4 L2942.9 193.8 L2953.6 183.2" fill="none" stroke="#00ae42" stroke-width="3.1"/>
<rect x="2449" y="209.7" width="16" height="16" fill="#9654CC"/>
<text x="2473.7" y="227.3" font-size="22" fill="#fff" textLength="173.4" lengthAdjust="spacingAndGlyphs">Internal solid infill</text>
<text x="2653.6" y="227.3" font-size="22" fill="#fff" textLength="76.4" lengthAdjust="spacingAndGlyphs">28m39s</text>
<text x="2741.2" y="227.3" font-size="22" fill="#fff" textLength="45.8" lengthAdjust="spacingAndGlyphs">9.2%</text>
<rect x="2933" y="206.7" width="25" height="25" fill="#545455"/>
<path d="M2937.6 219.3 L2942.9 224.7 L2953.6 214.1" fill="none" stroke="#00ae42" stroke-width="3.1"/>
<rect x="2449" y="240.7" width="16" height="16" fill="#F04040"/>
<text x="2473.7" y="258.2" font-size="22" fill="#fff" textLength="115.7" lengthAdjust="spacingAndGlyphs">Top surface</text>
<text x="2653.6" y="258.2" font-size="22" fill="#fff" textLength="20.7" lengthAdjust="spacingAndGlyphs">9s</text>
<text x="2739.7" y="258.2" font-size="22" fill="#fff" textLength="58.3" lengthAdjust="spacingAndGlyphs">&lt;0.1%</text>
<rect x="2933" y="237.7" width="25" height="25" fill="#545455"/>
<path d="M2937.6 250.2 L2942.9 255.7 L2953.6 245.1" fill="none" stroke="#00ae42" stroke-width="3.1"/>
<rect x="2449" y="271.6" width="16" height="16" fill="#665CC7"/>
<text x="2473.7" y="289.2" font-size="22" fill="#fff" textLength="151.4" lengthAdjust="spacingAndGlyphs">Bottom surface</text>
<text x="2653.6" y="289.2" font-size="22" fill="#fff" textLength="33" lengthAdjust="spacingAndGlyphs">13s</text>
<text x="2739.7" y="289.2" font-size="22" fill="#fff" textLength="58.3" lengthAdjust="spacingAndGlyphs">&lt;0.1%</text>
<rect x="2933" y="268.6" width="25" height="25" fill="#545455"/>
<path d="M2937.6 281.2 L2942.9 286.6 L2953.6 276.0" fill="none" stroke="#00ae42" stroke-width="3.1"/>
<rect x="2449" y="302.5" width="16" height="16" fill="#4D80BA"/>
<text x="2473.7" y="320.1" font-size="22" fill="#fff" textLength="64.6" lengthAdjust="spacingAndGlyphs">Bridge</text>
<text x="2653.6" y="320.1" font-size="22" fill="#fff" textLength="33" lengthAdjust="spacingAndGlyphs">15s</text>
<text x="2739.7" y="320.1" font-size="22" fill="#fff" textLength="58.3" lengthAdjust="spacingAndGlyphs">&lt;0.1%</text>
<rect x="2933" y="299.5" width="25" height="25" fill="#545455"/>
<path d="M2937.6 312.1 L2942.9 317.5 L2953.6 306.9" fill="none" stroke="#00ae42" stroke-width="3.1"/>
<rect x="2449" y="333.4" width="16" height="16" fill="#FFFFFF"/>
<text x="2473.7" y="351" font-size="22" fill="#fff" textLength="85.8" lengthAdjust="spacingAndGlyphs">Gap infill</text>
<text x="2653.6" y="351" font-size="22" fill="#fff" textLength="64" lengthAdjust="spacingAndGlyphs">3m43s</text>
<text x="2741.2" y="351" font-size="22" fill="#fff" textLength="45.8" lengthAdjust="spacingAndGlyphs">1.2%</text>
<rect x="2933" y="330.4" width="25" height="25" fill="#545455"/>
<path d="M2937.6 343.0 L2942.9 348.4 L2953.6 337.8" fill="none" stroke="#00ae42" stroke-width="3.1"/>
<rect x="2449" y="364.4" width="16" height="16" fill="#003B6E"/>
<text x="2473.7" y="382" font-size="22" fill="#fff" textLength="44.8" lengthAdjust="spacingAndGlyphs">Brim</text>
<text x="2653.6" y="382" font-size="22" fill="#fff" textLength="64" lengthAdjust="spacingAndGlyphs">1m57s</text>
<text x="2741.2" y="382" font-size="22" fill="#fff" textLength="45.8" lengthAdjust="spacingAndGlyphs">0.6%</text>
<rect x="2933" y="361.4" width="25" height="25" fill="#545455"/>
<path d="M2937.6 374.0 L2942.9 379.4 L2953.6 368.8" fill="none" stroke="#00ae42" stroke-width="3.1"/>
<rect x="2449" y="395.3" width="16" height="16" fill="#5ED194"/>
<text x="2473.7" y="412.9" font-size="22" fill="#fff" textLength="74.7" lengthAdjust="spacingAndGlyphs">Custom</text>
<text x="2653.6" y="412.9" font-size="22" fill="#fff" textLength="52" lengthAdjust="spacingAndGlyphs">7m0s</text>
<text x="2741.2" y="412.9" font-size="22" fill="#fff" textLength="45.8" lengthAdjust="spacingAndGlyphs">2.3%</text>
<rect x="2933" y="392.3" width="25" height="25" fill="#545455"/>
<path d="M2937.6 404.9 L2942.9 410.3 L2953.6 399.7" fill="none" stroke="#00ae42" stroke-width="3.1"/>
<rect x="2449" y="426.2" width="16" height="16" fill="#38489B"/>
<text x="2473.7" y="443.8" font-size="22" fill="#fff" textLength="59.3" lengthAdjust="spacingAndGlyphs">Travel</text>
<text x="2653.6" y="443.8" font-size="22" fill="#fff" textLength="76.4" lengthAdjust="spacingAndGlyphs">52m23s</text>
<text x="2741.2" y="443.8" font-size="22" fill="#fff" textLength="56.6" lengthAdjust="spacingAndGlyphs">16.9%</text>
<rect x="2933" y="423.2" width="25" height="25" fill="#545455"/>
<rect x="2449" y="457.2" width="16" height="16" fill="#CD22D6"/>
<text x="2473.7" y="474.8" font-size="22" fill="#fff" textLength="71.2" lengthAdjust="spacingAndGlyphs">Retract</text>
<rect x="2933" y="454.2" width="25" height="25" fill="#545455"/>
<rect x="2449" y="488.1" width="16" height="16" fill="#4AADCF"/>
<text x="2473.7" y="505.7" font-size="22" fill="#fff" textLength="94" lengthAdjust="spacingAndGlyphs">Unretract</text>
<rect x="2933" y="485.1" width="25" height="25" fill="#545455"/>
<rect x="2449" y="519" width="16" height="16" fill="#FFFF00"/>
<text x="2473.7" y="536.6" font-size="22" fill="#fff" textLength="50.3" lengthAdjust="spacingAndGlyphs">Wipe</text>
<rect x="2933" y="516" width="25" height="25" fill="#545455"/>
<rect x="2449" y="550" width="16" height="16" fill="#E6E6E6"/>
<text x="2473.7" y="567.5" font-size="22" fill="#fff" textLength="63.6" lengthAdjust="spacingAndGlyphs">Seams</text>
<rect x="2933" y="547" width="25" height="25" fill="#545455"/>
<path d="M2937.6 559.6 L2942.9 565.0 L2953.6 554.4" fill="none" stroke="#00ae42" stroke-width="3.1"/>
<text x="2448.6" y="608.2" font-size="21.5" fill="#fff" font-weight="bold" textLength="167.8" lengthAdjust="spacingAndGlyphs">Total estimation</text>
<rect x="2436.5" y="616.9" width="556.5" height="1.1" fill="#c4c4c4"/>
<text x="2448.6" y="642" font-size="22" fill="#fff" textLength="90" lengthAdjust="spacingAndGlyphs">Filament:</text>
<text x="2652.1" y="642" font-size="22" fill="#fff" textLength="77.6" lengthAdjust="spacingAndGlyphs">26.68 m</text>
<text x="2448.6" y="670.8" font-size="22" fill="#fff" textLength="49.5" lengthAdjust="spacingAndGlyphs">Cost:</text>
<text x="2652.1" y="670.8" font-size="22" fill="#fff" textLength="41" lengthAdjust="spacingAndGlyphs">2.12</text>
<text x="2448.6" y="699.6" font-size="22" fill="#fff" textLength="131.8" lengthAdjust="spacingAndGlyphs">Prepare time:</text>
<text x="2652.1" y="699.6" font-size="22" fill="#fff" textLength="65" lengthAdjust="spacingAndGlyphs">6m45s</text>
<text x="2448.6" y="728.4" font-size="22" fill="#fff" textLength="199.6" lengthAdjust="spacingAndGlyphs">Model printing time:</text>
<text x="2652.1" y="728.4" font-size="22" fill="#fff" textLength="55" lengthAdjust="spacingAndGlyphs">5h3m</text>
<text x="2448.6" y="757.2" font-size="22" fill="#fff" textLength="103.7" lengthAdjust="spacingAndGlyphs">Total time:</text>
<text x="2652.1" y="757.2" font-size="22" fill="#fff" textLength="67.5" lengthAdjust="spacingAndGlyphs">5h10m</text>
<text x="2751.7" y="642" font-size="22" fill="#fff" textLength="72.5" lengthAdjust="spacingAndGlyphs">84.71 g</text>
</svg>
</body></html>
